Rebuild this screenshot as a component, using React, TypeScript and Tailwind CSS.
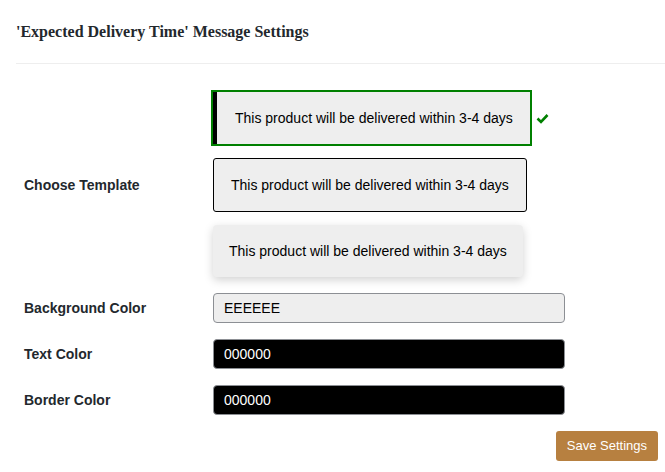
const MSG = 'This product will be delivered within 3-4 days'

function Row({ label, labelClass = '', children }: { label: string; labelClass?: string; children: React.ReactNode }) {
  return (
    <div className="flex items-center">
      <div className={'w-[189px] shrink-0 text-[14px] font-bold text-[#23282d] ' + labelClass}>{label}</div>
      {children}
    </div>
  )
}

function ColorInput({ value, dark }: { value: string; dark?: boolean }) {
  return (
    <div
      className={
        'w-[352px] h-[30px] flex items-center pl-[10px] rounded-[4px] border text-[14px] ' +
        (dark ? 'bg-black text-white border-[#8c8f94]' : 'bg-[#eeeeee] text-[#000] border-[#8c8f94]')
      }
    >
      {value}
    </div>
  )
}

export default function App() {
  return (
    <div className="w-[665px] h-[472px] bg-white overflow-hidden font-['Liberation_Sans',Arial,sans-serif]">
      <h2 className="pl-[16px] pt-[22px] text-[16px] leading-[20px] font-bold text-[#23282d] font-['Liberation_Serif','Times_New_Roman',serif]">
        'Expected Delivery Time' Message Settings
      </h2>
      <div className="ml-[16px] mt-[21px] border-t border-[#eeeeee]" />

      <div className="pl-[24px] pr-[7px] pt-[26px]">
        {/* Templates */}
        <Row label="Choose Template" labelClass="pt-[4px]">
          <div className="flex flex-col items-start">
            <div className="flex items-center -ml-[2px]">
              <div className="border-2 border-[#008000]">
                <div className="bg-[#eeeeee] border-l-4 border-black pl-[18px] pr-[17px] py-[16px] text-[14px] leading-[20px] text-black">
                  {MSG}
                </div>
              </div>
              <svg className="ml-[4px] mt-[1px]" width="13" height="11" viewBox="0 0 13 11">
                <path d="M1.5 5.5 L5 9 L11.5 2" fill="none" stroke="#008000" strokeWidth="2.6" />
              </svg>
            </div>
            <div className="mt-[12px] bg-[#eeeeee] border border-black rounded-[3px] px-[17px] py-[16px] text-[14px] leading-[20px] text-black">
              {MSG}
            </div>
            <div className="mt-[13px] bg-[#eeeeee] rounded-[4px] shadow-[0_3px_10px_rgba(0,0,0,0.18)] px-[16px] py-[16px] text-[14px] leading-[20px] text-black">
              {MSG}
            </div>
          </div>
        </Row>

        {/* Colours */}
        <div className="mt-[16px] flex flex-col gap-[16px]">
          <Row label="Background Color">
            <ColorInput value="EEEEEE" />
          </Row>
          <Row label="Text Color">
            <ColorInput value="000000" dark />
          </Row>
          <Row label="Border Color">
            <ColorInput value="000000" dark />
          </Row>
        </div>

        <div className="mt-[16px] flex justify-end">
          <button className="h-[30px] px-[11px] rounded-[3px] bg-[#b78040] text-white text-[13px]">
            Save Settings
          </button>
        </div>
      </div>
    </div>
  )
}
